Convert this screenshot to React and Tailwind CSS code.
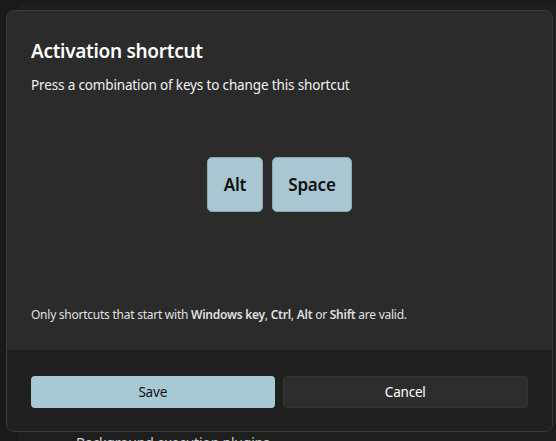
import React from "react";

const font = { fontFamily: '"Noto Sans", "Open Sans", sans-serif' };

function Key({ label, wide }) {
  return (
    <div
      className={`flex h-[55px] items-center justify-center rounded-[5px] border border-[#8fa9b3] bg-[#a8c7d2] text-[17px] font-semibold tracking-[-0.2px] text-[#111] ${
        wide ? "w-[80px]" : "w-[56px]"
      }`}
    >
      {label}
    </div>
  );
}

export default function App() {
  return (
    <div className="relative h-[441px] w-[556px] overflow-hidden bg-[#1a1a1a] text-white" style={font}>
      {/* page behind the dialog */}
      <div className="ml-[18px] mt-[4px] h-[437px] rounded-tl-[8px] bg-[#1e1e1e]">
        <div className="pt-[428px] pl-[58px] text-[14px] tracking-[-0.2px] text-[#cfcfcf]">Background execution plugins</div>
      </div>

      <div className="absolute left-[6px] top-[10px] flex h-[422px] w-[547px] flex-col overflow-hidden rounded-[8px] border border-[#3a3a3a] bg-[#2b2b2b]">
        <div className="flex flex-1 flex-col px-[24px] pt-[26px]">
          <h1 className="text-[19px] font-semibold leading-[28px] tracking-[-0.3px]">Activation shortcut</h1>
          <p className="mt-[10px] text-[13.5px] leading-[20px] tracking-[-0.15px] text-[#f2f2f2]">
            Press a combination of keys to change this shortcut
          </p>
          <div className="mt-[62px] flex justify-center gap-[9px]">
            <Key label="Alt" />
            <Key label="Space" wide />
          </div>
          <p className="mt-[95px] text-[12px] leading-[16px] tracking-[-0.25px] text-[#e0e0e0]">
            Only shortcuts that start with <b className="font-semibold">Windows key</b>, <b className="font-semibold">Ctrl</b>,{" "}
            <b className="font-semibold">Alt</b> or <b className="font-semibold">Shift</b> are valid.
          </p>
        </div>
        <div className="flex h-[81px] gap-[8px] border-t border-[#1d1d1d] bg-[#202020] px-[24px] pt-[25px]">
          <button className="h-[32px] flex-1 rounded-[4px] bg-[#a8c8d3] text-[13.5px] tracking-[-0.2px] text-[#111]">Save</button>
          <button className="h-[32px] flex-1 rounded-[4px] border border-[#333] bg-[#2d2d2d] text-[13.5px] tracking-[-0.2px] text-white">
            Cancel
          </button>
        </div>
      </div>
    </div>
  );
}
